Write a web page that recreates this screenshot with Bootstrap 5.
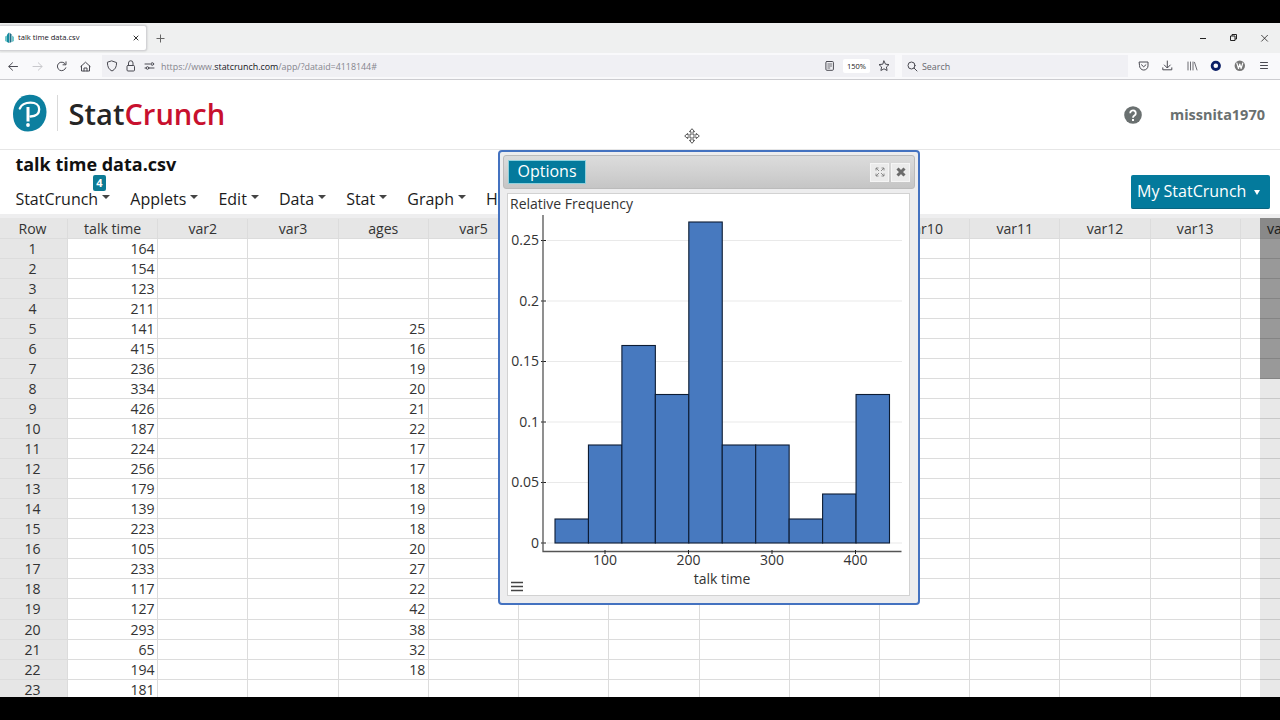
<!DOCTYPE html>
<html lang="en">
<head>
<meta charset="utf-8">
<title>talk time data.csv</title>
<link href="https://cdn.jsdelivr.net/npm/bootstrap@5.3.0/dist/css/bootstrap.min.css" rel="stylesheet">
<style>
body{font-family:"Open Sans","Noto Sans",sans-serif;background:#000;color:#1a1a1a;width:1280px;height:720px;overflow:hidden;line-height:1.2}
svg{display:block;flex:none}
.stage{margin-top:23px;height:674px;background:#fff}
.tabs{height:30px;background:#eff0f0}
.tab-on{width:147px;height:26px;margin-top:2px;background:#fff;border:1px solid #d3d3d6;border-left:0;border-radius:0 3px 3px 0;box-shadow:0 0 2px #bbb;font-size:7.6px;color:#15141a}
.tools{height:27px;background:#f9f9fb;border-bottom:1px solid #ccccd0;color:#5b5b66}
.field{background:#f0f0f4;height:22px}
.ico{fill:none;stroke:#4a4a52;stroke-width:1;stroke-linecap:round;stroke-linejoin:round}
.url{font-size:8.9px;color:#85858d;white-space:nowrap;padding-top:2px}
.url b{font-weight:400;color:#15141a}
.zoomed{font-size:7.5px;width:27px;height:14px;background:#fff;color:#222;border-radius:2px}
.brand{height:70px;border-bottom:1px solid #e6e6e6}
.rule-v{width:1px;height:36px;background:#d9d9d9}
.word{font-size:29.1px;font-weight:600;color:#252525;line-height:34px;white-space:nowrap;margin-top:-2px}
.word span{color:#c8102e}
.user{font:bold 14.5px "Noto Sans","Open Sans",sans-serif;color:#6a7070;margin-top:-1px}
.docbar{height:64px}
.doc-title{font-size:18px;font-weight:700;color:#111;line-height:24px;white-space:nowrap}
.menu-item{font-size:16px;line-height:22px;color:#1b1b1b;white-space:nowrap;display:flex}
.menu-item::after{content:"";border:4px solid transparent;border-top-color:#444;border-bottom:0;margin:7px 0 0 4px;height:0}
.menu-item:last-child::after{display:none}
.count{left:93px;top:25px;width:13px;height:16px;font-size:11px;font-weight:700;background:#0c7b95;color:#fff;border-radius:2px;line-height:16px;text-align:center}
.mine{width:139px;height:34px;background:#047a9c;border:0;border-bottom:1px solid #0b6580;border-radius:2px;color:#fff;font-size:16px;padding:1px 0 0 6px}
.mine i{border:3.5px solid transparent;border-top:5px solid #fff;border-bottom:0;margin-left:8px}
.sheet{height:483px;border-top:4px solid #eeeeef;padding-top:.6px;background:linear-gradient(#e6e6e6 3px,#fff 3px);overflow:hidden;font-size:14.1px;color:#333}
.line{display:grid;grid-template-columns:68px repeat(14,90.22px);height:20.06px;line-height:20.1px}
.line>div{border-right:1px solid #dcdcdc;border-bottom:1px solid #dcdcdc;text-align:right;padding-right:2.600px;overflow:hidden}
.line>div:first-child,.line.top>div{background:#e6e6e6;text-align:center;padding:0;border-color:#dcdcdc}
.line>div:first-child{padding-right:2px!important}
.scroller{right:0;width:20px;background:rgba(0,0,0,.09)}
.scroller div{height:161px;background:rgba(0,0,0,.34)}
.win{left:498px;top:127px;width:422px;height:455px;background:#ededee;border:2px solid #4472c0;border-radius:4px;padding:3px 3px 0}
.win-head{height:34px;background:linear-gradient(#dcdcdc,#cfcfcf 60%,#c5c5c5);border:1px solid #bbb;border-radius:3px;padding:0 4px 0 6px}
.opt{width:78px;height:24px;background:#047a9c;border:1px solid #8fd0dc;color:#fff;font-size:16px;line-height:21px;text-align:center}
.wb{width:19px;height:19px;background:#ebebeb;border:1px solid #f5f5f5}
.plot{margin:4px 5px 0 4px;width:403px;height:403px;background:#fff;border:1px solid #d2d2d2}
.plot text{font-size:14px;fill:#333}
.pointer-mark{left:684px;top:105px}
</style>
</head>
<body>
<main class="stage position-relative">
  <div class="tabs d-flex">
    <div class="tab-on d-flex align-items-center">
      <svg class="ms-1" width="11" height="12"><path d="M1 4.500v4.500l2 1V3.500zM8 3.500v6.500l2-1V5z" fill="#71c7c9"/><path d="M3 2.500l2-2V11L3 10z" fill="#168ba0"/><path d="M5.500.5l2 2V10l-2 1z" fill="#1d6d86"/></svg>
      <span style="margin-left:3px">talk time data.csv</span>
      <svg class="ms-auto" style="margin-right:7px" width="6" height="6"><path d="M.7.7l4.600 4.600M5.300.7L.7 5.300" stroke="#333" fill="none"/></svg>
    </div>
    <svg style="margin:11px 0 0 9px" width="9" height="9"><path d="M4.500.5v8M.5 4.500h8" stroke="#666" fill="none"/></svg>
    <svg class="ms-auto" width="80" height="30" fill="none" stroke="#222"><path d="M0 15.500h6"/><path d="M30.500 13h4.500v4.500h-4.500zM32 13v-1.500h4.500V16H35" /><path d="M61.300 12l6.500 6.500M67.800 12l-6.500 6.500" stroke-width=".8"/></svg>
  </div>
  <div class="tools d-flex align-items-center">
    <svg class="ico" width="102" height="26"><path d="M9 13.500H17.500M12.500 9.800L8.700 13.500l3.800 3.700"/><path d="M33 13.500h9M38.300 9.800l3.800 3.700-3.800 3.700" stroke="#c8c8cc"/><path d="M65.300 11a4.300 4.300 0 1 0 .5 3.800M66 8.800v3h-3"/><path d="M80.800 13.500l4.700-4.300 4.700 4.300M81.500 13v5h8v-5M84 18v-3h3v3"/></svg>
    <div class="field d-flex align-items-center" style="width:793px">
      <svg class="ico" width="55" height="22"><path d="M10 6l4.600 1.600c0 4.500-1.600 7-4.600 8.400-3-1.400-4.600-3.900-4.600-8.400z"/><rect x="25" y="10.500" width="7.500" height="5.500" rx="1"/><path d="M26.500 10.500V8a2.200 2.200 0 0 1 4.500 0v2.500"/><path d="M43 9h5M43 13h1M47 13h5"/><circle cx="50.300" cy="9" r="1.300"/><circle cx="45.500" cy="13" r="1.300"/></svg>
      <span class="url" style="margin-left:4px">https://www.<b>statcrunch.com</b>/app/?dataid=4118144#</span>
      <svg class="ico ms-auto" width="10" height="10"><rect x=".9" y=".5" width="7.500" height="8.800" rx="1"/><path d="M2.800 3h3.800M2.800 5h3.800M2.800 7h2" stroke-width=".8"/></svg>
      <span class="zoomed d-flex align-items-center justify-content-center" style="margin:0 8px">150%</span>
      <svg class="ico" width="12" height="12" style="margin-right:5px"><path d="M6 1l1.500 3.200 3.500.4-2.600 2.400.7 3.500L6 8.800 2.900 10.500l.7-3.500L1 4.600l3.500-.4z"/></svg>
    </div>
    <div class="field d-flex align-items-center" style="width:226px;margin-left:7px;padding-left:5px">
      <svg class="ico" width="11" height="11"><circle cx="4.500" cy="4.500" r="3.500"/><path d="M7 7l3 3"/></svg>
      <span class="url" style="margin-left:4px;color:#66666f">Search</span>
    </div>
    <svg class="ico" width="152" height="26" stroke="#5b5b66"><path d="M11.500 9h8.500v3.800a4.250 4.250 0 0 1-8.500 0zM13.500 11.800l2.200 2 2.200-2"/><path d="M39.300 8v6.500M36.300 12l3 3 3-3M34.800 14.800v2h9v-2"/><path d="M60 9v8M62.500 9v8M65 9v8M66.500 9.300l2.500 7.700" style="stroke-width:.8"/><circle cx="87.800" cy="12.800" r="3.700" style="stroke:#0b1f66;stroke-width:2.800"/><circle cx="111.800" cy="12.800" r="5.200" style="fill:#777;stroke:none"/><path d="M108.800 10l1.700 5.500 1.300-4.500 1.300 4.500 1.700-5.500" style="stroke:#fff;stroke-width:1.100"/><path d="M132.500 9.500h7M132.500 12.500h7M132.500 15.500h7"/></svg>
  </div>

  <header class="brand d-flex align-items-center">
    <svg style="margin:-3px 0 0 12px" width="35" height="38"><path d="M17.500.7C28.500.7 34.500 8 34.500 18S28 37.500 16 37.500C6 37.500 1 30 1 20S7.500.7 17.500.7z" fill="#0c7f9f"/><path d="M7.800 14.500C9.500 10.500 14 8.700 18.500 8.700c5.200 0 8.700 2.400 8.700 6.500 0 4.400-3.500 7-8.700 7.300" fill="none" stroke="#fff" stroke-width="2.300" stroke-linecap="round"/><path d="M16 13v14.500" stroke="#fff" stroke-width="3"/><circle cx="16" cy="31" r="1.900" fill="#fff"/></svg>
    <div class="rule-v" style="margin:-4px 10.500px 0 10px"></div>
    <div class="word">Stat<span>Crunch</span></div>
    <svg class="ms-auto" width="18" height="18" style="margin-right:28px"><circle cx="9" cy="9" r="8.800" fill="#6a7070"/><path d="M6.200 7.200a2.800 2.800 0 1 1 4.300 2.300C9.500 10.200 9 10.500 9 11.800" fill="none" stroke="#fff" stroke-width="1.800"/><rect x="8" y="13" width="2" height="2" fill="#fff"/></svg>
    <div class="user" style="margin-right:15px">missnita1970</div>
  </header>

  <section class="docbar position-relative d-flex justify-content-between">
    <div style="padding:2px 0 0 15.400px">
      <div class="doc-title">talk time data.csv</div>
      <nav class="d-flex" style="margin-top:12px;gap:20.100px">
        <span class="menu-item">StatCrunch</span><span class="menu-item">Applets</span><span class="menu-item">Edit</span><span class="menu-item">Data</span><span class="menu-item">Stat</span><span class="menu-item">Graph</span><span class="menu-item">H</span>
      </nav>
    </div>
    <span class="count position-absolute">4</span>
    <button class="mine d-flex align-items-center" style="margin:25px 10px 0 0">My StatCrunch<i></i></button>
  </section>

  <section class="sheet position-relative">
    <div id="grid"></div>
  </section>
  <div class="scroller position-absolute" style="top:195px;height:479px"><div></div></div>

  <section class="win position-absolute">
    <div class="win-head d-flex align-items-center">
      <div class="opt" style="margin-left:-2px">Options</div>
      <div class="wb ms-auto d-flex align-items-center justify-content-center"><svg width="10" height="10" fill="none" stroke="#777"><path d="M1 3.500V1h2.500M6.500 1H9v2.500M9 6.500V9H6.500M3.500 9H1V6.500M1 1l3 3M9 1L6 4M9 9L6 6M1 9l3-3" stroke-width=".8"/></svg></div>
      <div class="wb d-flex align-items-center justify-content-center" style="margin-left:2px"><svg width="10" height="10"><path d="M1.500 1.500l7 7M8.500 1.500l-7 7" stroke="#6b6b6b" stroke-width="3"/></svg></div>
    </div>
    <div class="plot"><svg id="chart" width="401" height="401" viewBox="508 194 401 401"></svg></div>
  </section>

  <svg class="pointer-mark position-absolute" width="16" height="16" fill="#fff" stroke="#444" stroke-width=".9"><path d="M8 .7l2.600 3H9v3.300h3.300V5.400l3 2.600-3 2.600V9H9v3.300h1.600l-2.600 3-2.600-3H7V9H3.700v1.600L.7 8l3-2.600V7H7V3.700H5.400z"/></svg>
</main>
<script>
const talk=[164,154,123,211,141,415,236,334,426,187,224,256,179,139,223,105,233,117,127,293,65,194,181];
const ages=['','','','',25,16,19,20,21,22,17,17,18,19,18,20,27,22,42,38,32,18,''];
const line=(cells,c='')=>`<div class="line ${c}">${cells.map(v=>`<div>${v}</div>`).join('')}</div>`;
const heads=['Row','talk time','var2','var3','ages'];
for(let i=5;i<15;i++)heads.push('var'+i);
document.getElementById('grid').innerHTML=line(heads,'top')+talk.map((t,i)=>{
  const r=Array(15).fill('');r[0]=i+1;r[1]=t;r[4]=ages[i];return line(r);}).join('');

// Histogram: axis, grid lines and bars
let s='';
[[0,543],[.05,482.5],[.1,422],[.15,361.5],[.2,301],[.25,240.500]].forEach(([v,y])=>{
  s+=`<path d="M547 ${y}H902" stroke="#e9e9e9"/><path d="M541 ${y}h5" stroke="#222"/><text x="539" y="${y+4.500}" text-anchor="end">${v}</text>`;});
const tops=[519,445,345.500,394.500,222,445,445,519,494,394.500];
tops.forEach((y,i)=>{const x=555+i*33.45;s+=`<rect x="${x}" y="${y}" width="33.45" height="${543-y}" fill="#4779bf" stroke="#0d1c33" stroke-width="1.1"/>`;});
s+='<path d="M543 215V551.500H901.500" fill="none" stroke="#555" stroke-width="1.300"/>';
[100,200,300,400].forEach((v,i)=>{const x=605+i*83.5;s+=`<path d="M${x} 550v4" stroke="#222"/><text x="${x}" y="565" text-anchor="middle">${v}</text>`;});
s+='<text x="510" y="209">Relative Frequency</text><text x="722" y="583.500" text-anchor="middle">talk time</text><path d="M511 582.500h12M511 586.500h12M511 590.500h12" stroke="#444" stroke-width="1.300"/>';
document.getElementById('chart').innerHTML=s;
</script>
<script src="https://cdn.jsdelivr.net/npm/bootstrap@5.3.0/dist/js/bootstrap.bundle.min.js"></script>
</body>
</html>
